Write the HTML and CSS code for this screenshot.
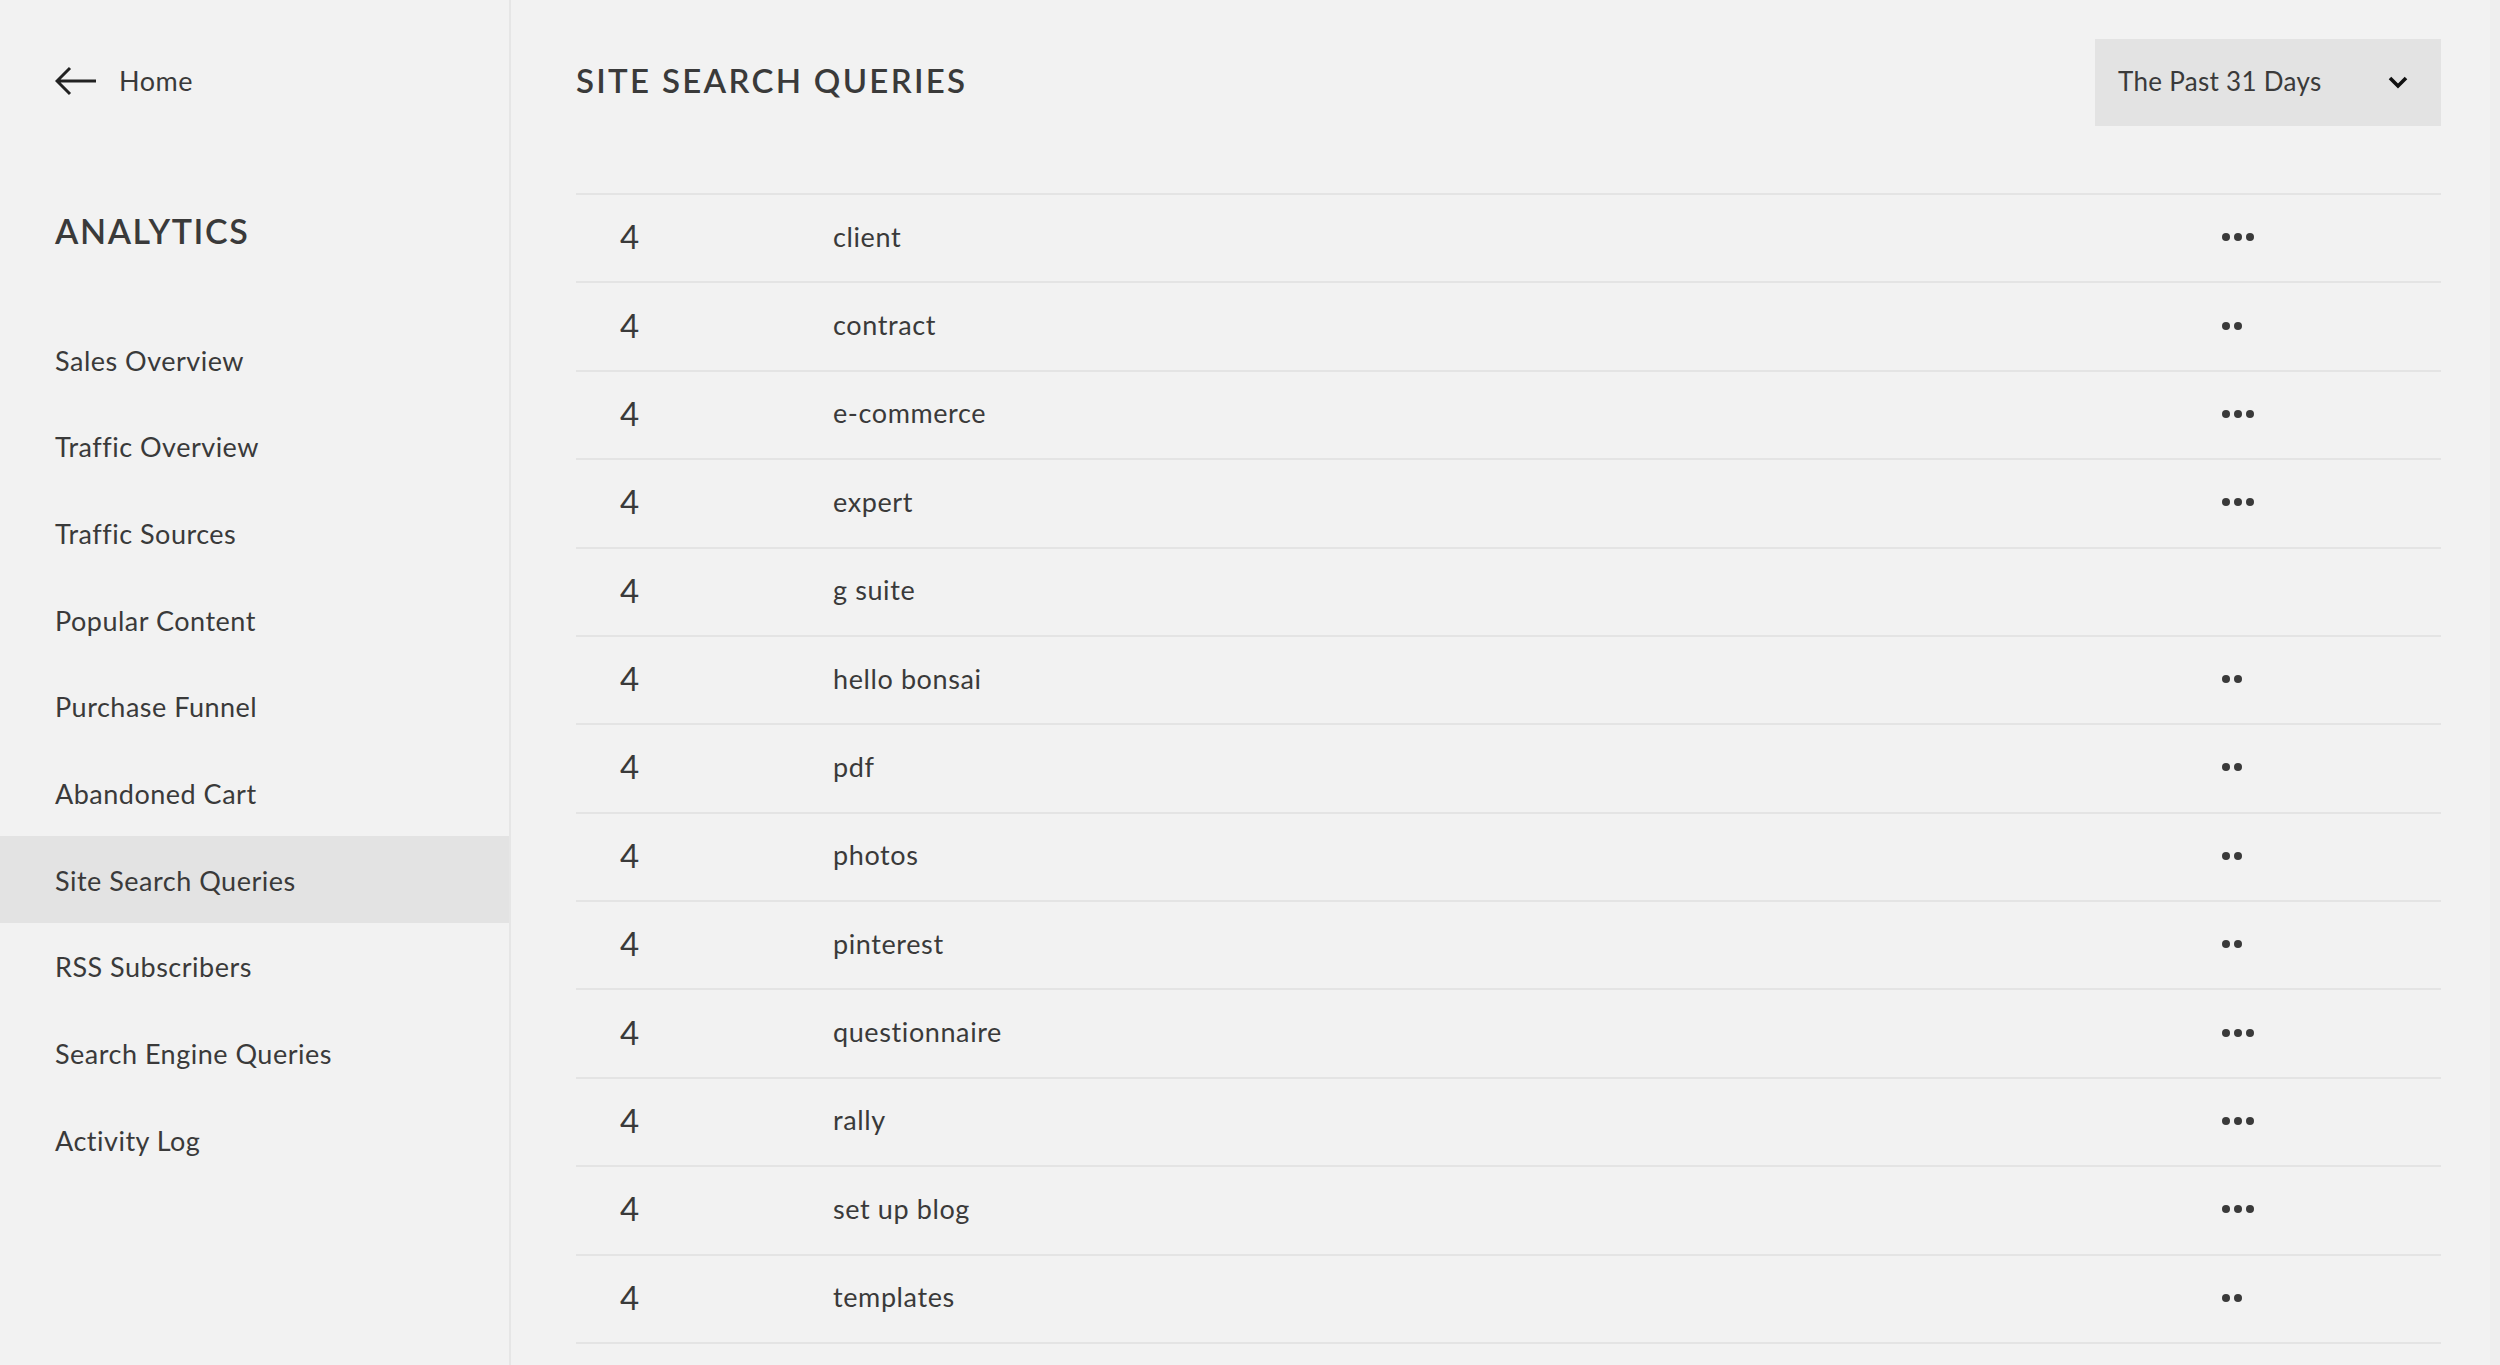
FILE: index.html
```html
<!DOCTYPE html>
<html>
<head>
<meta charset="utf-8">
<link rel="stylesheet" href="styles.css">
</head>
<body>
<div class="app">
  <aside class="sidebar">
    <a class="home" href="#">
      <svg class="home-arrow" width="42" height="30" viewBox="0 0 42 30"><path d="M41 15H3M15 2L2 15l13 13" fill="none" stroke="#222" stroke-width="3"/></svg>
      <span>Home</span>
    </a>
    <h2 class="side-title">ANALYTICS</h2>
    <nav class="nav">
      <a class="nav-item" href="#">Sales Overview</a>
      <a class="nav-item" href="#">Traffic Overview</a>
      <a class="nav-item" href="#">Traffic Sources</a>
      <a class="nav-item" href="#">Popular Content</a>
      <a class="nav-item" href="#">Purchase Funnel</a>
      <a class="nav-item" href="#">Abandoned Cart</a>
      <a class="nav-item active" href="#">Site Search Queries</a>
      <a class="nav-item" href="#">RSS Subscribers</a>
      <a class="nav-item" href="#">Search Engine Queries</a>
      <a class="nav-item" href="#">Activity Log</a>
    </nav>
  </aside>
  <main class="main">
    <header class="header">
      <h1 class="title">SITE SEARCH QUERIES</h1>
      <div class="select">
        <span>The Past 31 Days</span>
        <svg class="chev" width="20" height="13" viewBox="0 0 20 13"><path d="M2 2l8 8 8-8" fill="none" stroke="#111" stroke-width="3.6"/></svg>
      </div>
    </header>
    <div class="table">
      <div class="row"><span class="num">4</span><span class="q">client</span><span class="dots"><i></i><i></i><i></i></span></div>
      <div class="row"><span class="num">4</span><span class="q">contract</span><span class="dots"><i></i><i></i></span></div>
      <div class="row"><span class="num">4</span><span class="q">e-commerce</span><span class="dots"><i></i><i></i><i></i></span></div>
      <div class="row"><span class="num">4</span><span class="q">expert</span><span class="dots"><i></i><i></i><i></i></span></div>
      <div class="row"><span class="num">4</span><span class="q">g suite</span><span class="dots"></span></div>
      <div class="row"><span class="num">4</span><span class="q">hello bonsai</span><span class="dots"><i></i><i></i></span></div>
      <div class="row"><span class="num">4</span><span class="q">pdf</span><span class="dots"><i></i><i></i></span></div>
      <div class="row"><span class="num">4</span><span class="q">photos</span><span class="dots"><i></i><i></i></span></div>
      <div class="row"><span class="num">4</span><span class="q">pinterest</span><span class="dots"><i></i><i></i></span></div>
      <div class="row"><span class="num">4</span><span class="q">questionnaire</span><span class="dots"><i></i><i></i><i></i></span></div>
      <div class="row"><span class="num">4</span><span class="q">rally</span><span class="dots"><i></i><i></i><i></i></span></div>
      <div class="row"><span class="num">4</span><span class="q">set up blog</span><span class="dots"><i></i><i></i><i></i></span></div>
      <div class="row"><span class="num">4</span><span class="q">templates</span><span class="dots"><i></i><i></i></span></div>
    </div>
  </main>
  <div class="scrolltrack"></div>
</div>
</body>
</html>
```

FILE: styles.css
```css
* { box-sizing: border-box; }
html, body { margin: 0; padding: 0; height: 100%; }
body {
  background: #f2f2f2;
  color: #3a3a3a;
  font-family: "Lato", "Liberation Sans", sans-serif;
  overflow: hidden;
}
.app { display: flex; height: 1365px; }
.sidebar {
  width: 511px;
  flex: none;
  border-right: 2px solid #e6e6e6;
  display: flex;
  flex-direction: column;
}
.home {
  display: flex;
  align-items: center;
  gap: 22px;
  padding-left: 55px;
  margin-top: 66px;
  height: 30px;
  color: #3a3a3a;
  text-decoration: none;
  font-size: 27px;
  letter-spacing: 0.5px;
}
.home span { padding-bottom: 2px; }
.side-title {
  margin: 0;
  margin-top: 115px;
  padding-left: 55px;
  font-size: 34px;
  font-weight: 600;
  letter-spacing: 1.6px;
  line-height: 40px;
  color: #3a3a3a;
}
.nav { margin-top: 65px; display: flex; flex-direction: column; }
.nav-item {
  height: 86.67px;
  display: flex;
  align-items: center;
  padding-left: 55px;
  padding-top: 2px;
  color: #3a3a3a;
  text-decoration: none;
  font-size: 27px;
  letter-spacing: 0.5px;
}
.nav-item.active { background: #e3e3e3; }
.main {
  flex: 1;
  padding: 39px 49px 0 65px;
}
.header {
  display: flex;
  align-items: center;
  justify-content: space-between;
  height: 87px;
  margin-bottom: 67px;
}
.title {
  margin: 0;
  padding-bottom: 6px;
  font-size: 33px;
  font-weight: 600;
  letter-spacing: 2.3px;
  color: #3a3a3a;
}
.select {
  width: 346px;
  height: 87px;
  background: #e3e3e3;
  display: flex;
  align-items: center;
  justify-content: space-between;
  padding: 0 33px 0 23px;
  font-size: 26px;
  letter-spacing: 0.3px;
}
.select span { padding-bottom: 3px; }
.chev { display: block; }
.table { border-top: 2px solid #e4e4e4; }
.row {
  display: flex;
  align-items: center;
  height: 88.38px;
  padding-bottom: 4px;
  border-bottom: 2px solid #e4e4e4;
}
.num {
  width: 257px;
  padding-left: 44px;
  font-size: 33px;
  flex: none;
}
.q {
  flex: 1;
  font-size: 27px;
  letter-spacing: 0.6px;
}
.dots {
  width: 219px;
  flex: none;
  display: flex;
  gap: 4px;
  padding-top: 2px;
}
.dots i {
  display: block;
  width: 8px;
  height: 8px;
  border-radius: 50%;
  background: #3a3a3a;
}
.scrolltrack { width: 10px; flex: none; background: #eeeeee; }
```
